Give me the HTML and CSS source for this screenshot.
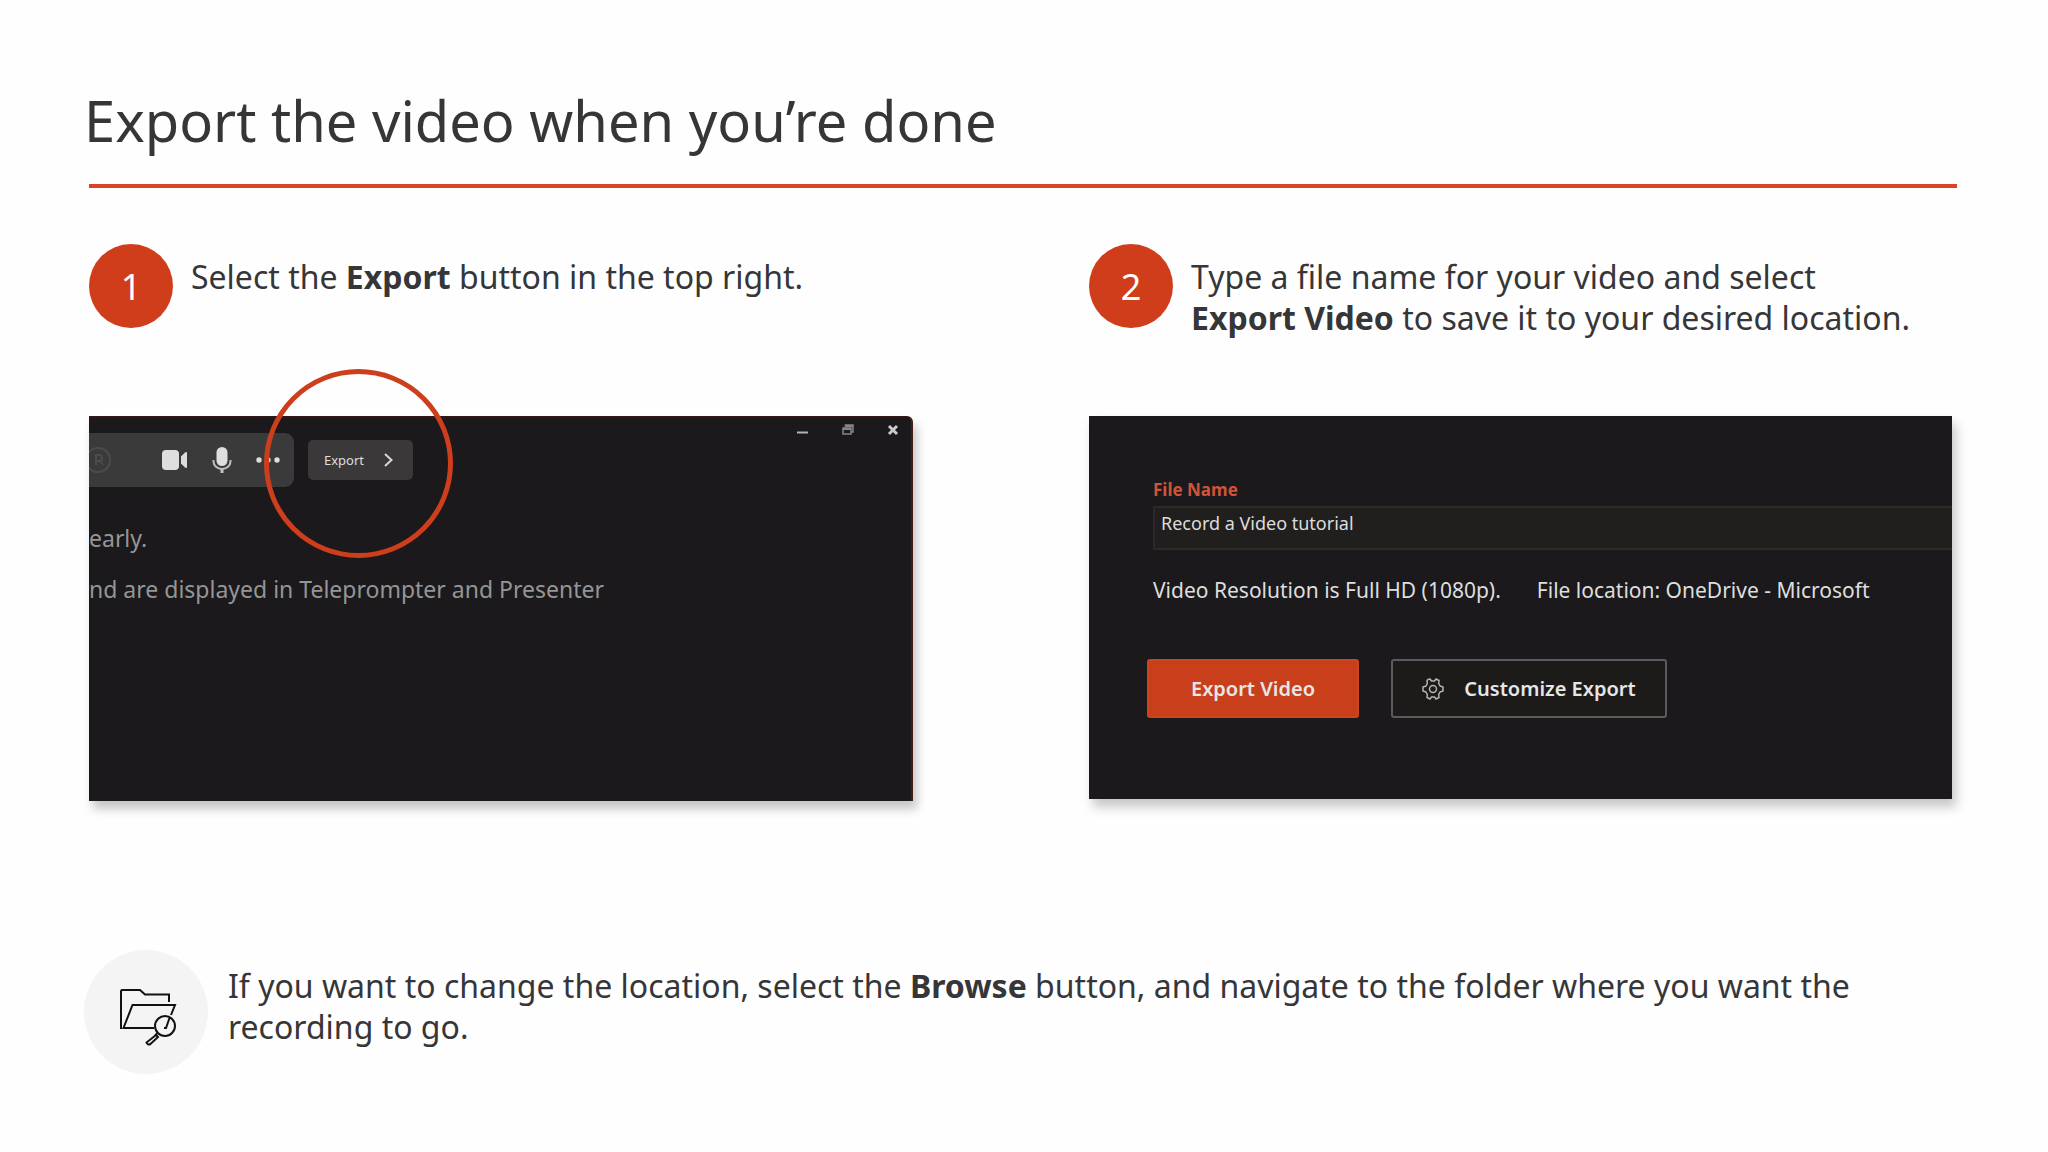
FILE: index.html
```
<!DOCTYPE html>
<html lang="en">
<head>
<meta charset="utf-8">
<title>Export the video when you’re done</title>
<link rel="stylesheet" href="styles.css">
</head>
<body>
<main class="slide">
  <h1 class="title">Export the video when you’re done</h1>

  <div class="steps">
    <section class="step">
      <div class="step-head">
        <span class="badge">1</span>
        <p class="copy">Select the <strong>Export</strong> button in the top right.</p>
      </div>
      <div class="shot">
        <div class="panel panel-recorder">
          <div class="topbar">
            <div class="tools">
              <svg class="reset" width="23" height="28" viewBox="0 0 23 28" fill="none" stroke="#4c4c4c" stroke-width="2"><circle cx="9" cy="14" r="12"/><path d="M7 19V9h3a3 3 0 0 1 0 6H7m4 0 3 4"/></svg>
              <svg width="26" height="20" viewBox="0 0 26 20" fill="#dedede"><rect x="0" y="0" width="17" height="20" rx="4"/><path d="M19 6.500 23 2.500Q25 1.500 25 3v14q0 1.500-2 .5l-4-4z"/></svg>
              <svg width="20" height="27" viewBox="0 0 20 27" fill="none" stroke="#c0c0c0" stroke-width="2"><rect x="4.500" y="0" width="11" height="19" rx="5.500" fill="#dedede" stroke="none"/><path d="M1.500 13v1.500a8.500 7.500 0 0 0 17 0V13"/><path d="M10 22v4" stroke-width="3"/></svg>
              <svg width="24" height="6" viewBox="0 0 24 6" fill="#dedede"><circle cx="3" cy="3" r="2.700"/><circle cx="12" cy="3" r="2.700"/><circle cx="21" cy="3" r="2.700"/></svg>
            </div>
            <button class="export" type="button">Export
              <svg width="9" height="14" viewBox="0 0 9 14" fill="none" stroke="#d8d8d0" stroke-width="2"><path d="m1 1 6.500 6L1 13"/></svg>
            </button>
            <div class="window-controls">
              <button type="button" aria-label="Minimize"><svg width="12" height="14" viewBox="0 0 12 14"><path d="M0 9.500h11" stroke="#b4b4b4" stroke-width="2"/></svg></button>
              <button type="button" aria-label="Restore"><svg width="12" height="14" viewBox="0 0 12 14" fill="none" stroke="#868686" stroke-width="1.500"><path d="M3.500 4V2H11v7H9"/><path d="M1 5h8v6H1z"/><path d="M1 6h8M3.500 3H11" stroke-width="2"/></svg></button>
              <button type="button" aria-label="Close"><svg width="12" height="14" viewBox="0 0 12 14"><path d="m2 3 8 8m0-8-8 8" stroke="#cacaca" stroke-width="3"/></svg></button>
            </div>
          </div>
          <p class="notes">early.</p>
          <p class="notes">nd are displayed in Teleprompter and Presenter</p>
        </div>
        <span class="ring"></span>
      </div>
    </section>

    <section class="step">
      <div class="step-head">
        <span class="badge">2</span>
        <p class="copy">Type a file name for your video and select<br><strong>Export Video</strong> to save it to your desired location.</p>
      </div>
      <div class="shot">
        <form class="panel panel-export">
          <label class="field-label" for="file-name">File Name</label>
          <input class="field" id="file-name" type="text" value="Record a Video tutorial">
          <div class="info">
            <span>Video Resolution is Full HD (1080p).</span>
            <span>File location: OneDrive - Microsoft</span>
          </div>
          <div class="actions">
            <button class="action primary" type="button">Export Video</button>
            <button class="action" type="button">
              <svg width="22" height="22" viewBox="0 0 22 22" fill="none" stroke="#b4b4b0" stroke-width="1.500" stroke-linejoin="round"><path d="M6 1.500 8 1l1.500 2h3L14 1l3 1.500-.3 3L18 8l3 1v4l-3 1-1.300 2.500.3 3L14 21l-1.500-2h-3L8 21l-3-1.500.3-3L4 14l-3-1V9l3-1 1.300-2.500L5 2.500z"/><circle cx="11" cy="11" r="3.500"/></svg>
              Customize Export
            </button>
          </div>
        </form>
      </div>
    </section>
  </div>

  <aside class="tip">
    <span class="tip-icon">
      <svg width="58" height="58" viewBox="0 0 58 58" fill="none" stroke="#111" stroke-width="2"><path d="M2 41V3l1-1h18l5 4.500h24V14"/><path d="M35 40H4.500L13.500 17H56l-4 10M45 40h2l3.500-10"/><circle cx="46" cy="38" r="10"/><path d="m38.500 45-2.500 2.500M37 47l2 2-7.500 7q-3 1.500-4-1.500z"/></svg>
    </span>
    <p class="copy">If you want to change the location, select the <strong>Browse</strong> button, and navigate to the folder where you want the recording to go.</p>
  </aside>
</main>
</body>
</html>
```
FILE: styles.css
```
* {
  box-sizing: border-box;
}

body {
  margin: 0;
  background: #fefefe;
  color: #363638;
  font-family: "Noto Sans", "Open Sans", sans-serif;
}

p,
h1 {
  margin: 0;
}

button {
  font: inherit;
  color: inherit;
}

svg {
  display: block;
  flex: none;
}

.slide {
  padding: 80px 91px 72px 89px;
}

.title {
  padding-bottom: 24px;
  border-bottom: 4px solid #d64527;
  font-size: 56px;
  font-weight: 400;
  line-height: 80px;
  text-indent: -5px;
}

.steps {
  display: grid;
  grid-template-columns: 824fr 863fr;
  gap: 176px;
  align-items: start;
  padding: 56px 5px 0 0;
}

.step-head {
  display: flex;
  gap: 18px;
  min-height: 172px;
}

.badge {
  flex: none;
  width: 84px;
  height: 84px;
  border-radius: 50%;
  background: #cf3d1b;
  color: #fff;
  font-size: 36px;
  line-height: 86px;
  text-align: center;
}

.copy {
  padding-top: 12px;
  font-size: 32px;
  line-height: 41px;
}

.shot {
  position: relative;
}

.panel {
  overflow: hidden;
  background: #1b191b;
  box-shadow: 4px 8px 10px rgba(40, 30, 40, 0.25);
}

.panel-recorder {
  padding-bottom: 196px;
  border-top: 2px solid #321618;
  border-right: 2px solid #442013;
  border-top-right-radius: 6px;
}

.topbar {
  display: flex;
  align-items: flex-start;
  gap: 14px;
  margin-bottom: 35px;
}

.tools {
  display: flex;
  align-items: center;
  height: 54px;
  margin-top: 15px;
  padding-right: 14px;
  border-radius: 0 9px 9px 0;
  background: #3a3a3a;
  gap: 24px;
}

.reset {
  margin-right: 26px;
}

.export {
  display: flex;
  align-items: center;
  gap: 20px;
  height: 40px;
  margin-top: 22px;
  padding: 0 20px 0 16px;
  border: 0;
  border-radius: 5px;
  background: #3b3839;
  color: #dedede;
  font-size: 13px;
}

.window-controls {
  display: flex;
  gap: 33px;
  margin: 5px 12px 0 auto;
}

.window-controls button {
  padding: 0;
  border: 0;
  background: none;
}

.notes {
  color: #959595;
  font-size: 23px;
  line-height: 32px;
  white-space: nowrap;
}

.notes + .notes {
  margin-top: 19px;
}

.ring {
  position: absolute;
  top: -47px;
  left: 175px;
  width: 189px;
  height: 189px;
  border: 5px solid #cd3e1d;
  border-radius: 50%;
}

.panel-export {
  padding: 60px 0 81px 64px;
}

.field-label {
  display: block;
  color: #cf5439;
  font-size: 17px;
  font-weight: 700;
  line-height: 28px;
}

.field {
  display: block;
  width: 100%;
  height: 44px;
  margin-top: 2px;
  padding: 0 6px 10px;
  border: 2px solid #2b292a;
  border-right: 0;
  background: #211e1e;
  color: #dcdcdc;
  font: inherit;
  font-size: 18px;
}

.info {
  display: flex;
  gap: 36px;
  margin-top: 25px;
  color: #dedede;
  font-size: 21px;
  line-height: 30px;
  white-space: nowrap;
}

.actions {
  display: flex;
  gap: 32px;
  margin: 54px 0 0 -6px;
}

.action {
  display: flex;
  align-items: center;
  justify-content: center;
  gap: 20px;
  width: 276px;
  height: 59px;
  padding: 0;
  border: 2px solid #5c5a5b;
  border-radius: 3px;
  background: #1c1b1a;
  color: #e6e6e6;
  font-size: 20px;
  font-weight: 600;
}

.primary {
  width: 212px;
  border-color: #cb451f;
  background: #c93f1b;
}

.tip {
  display: flex;
  gap: 20px;
  margin-left: -5px;
  padding-top: 149px;
}

.tip-icon {
  display: flex;
  flex: none;
  align-items: center;
  justify-content: center;
  width: 124px;
  height: 124px;
  padding: 9px 0 0 4px;
  border-radius: 50%;
  background: #f4f4f4;
}

.tip .copy {
  padding-top: 15px;
}
```
